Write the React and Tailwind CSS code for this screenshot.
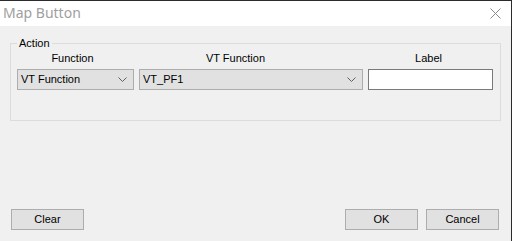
import React from "react";

function Chevron() {
  return (
    <svg width="9" height="5" viewBox="0 0 9 5" className="block">
      <path d="M0.5 0.5 L4.5 4.5 L8.5 0.5" fill="none" stroke="#5f5f5f" strokeWidth="1" />
    </svg>
  );
}

function Combo({ value, width }) {
  return (
    <div
      className={`flex items-center justify-between h-[21px] border border-[#adadad] bg-[#e1e1e1] pl-[3px] pr-[6px] text-[11px] text-black ${width}`}
    >
      <span className="leading-none">{value}</span>
      <Chevron />
    </div>
  );
}

function Button({ children }) {
  return (
    <button className="w-[73px] h-[21px] border border-[#adadad] bg-[#e1e1e1] text-[11px] text-black leading-none">
      {children}
    </button>
  );
}

export default function App() {
  return (
    <div
      className="w-[512px] h-[241px] flex flex-col border-t border-r border-[#2b2b2b] bg-[#f0f0f0] overflow-hidden"
      style={{ fontFamily: '"Liberation Sans", Arial, sans-serif' }}
    >
      <div className="h-[25px] shrink-0 bg-white flex items-center justify-between pl-[3px] pr-[10px]">
        <span
          className="text-[14px] text-[#a0a0a0] leading-none pb-[2px]"
          style={{ fontFamily: '"Noto Sans", "Open Sans", sans-serif' }}
        >
          Map Button
        </span>
        <svg width="11" height="11" viewBox="0 0 11 11" className="block mb-[1px]">
          <path d="M0.5 0.5 L10.5 10.5 M10.5 0.5 L0.5 10.5" stroke="#8a8a8a" strokeWidth="1" fill="none" />
        </svg>
      </div>
      <div className="flex-1 flex flex-col">
        <fieldset className="ml-[10px] mt-[11px] w-[491px] h-[84px] border border-[#dcdcdc] pl-[6px] pr-[6px] pt-0 m-0">
          <legend className="ml-0 px-[2px] text-[11px] leading-[13px] text-black">Action</legend>
          <div className="flex text-[11px] leading-[13px] text-black mt-[2px]">
            <div className="w-[111px] text-center">Function</div>
            <div className="w-[215px] text-center">VT Function</div>
            <div className="w-[121px] ml-[25px] text-center">Label</div>
          </div>
          <div className="flex mt-[4px]">
            <Combo value="VT Function" width="w-[117px]" />
            <div className="ml-[5px]">
              <Combo value="VT_PF1" width="w-[224px]" />
            </div>
            <div className="ml-[5px] w-[125px] h-[21px] border border-[#7a7a7a] bg-white" />
          </div>
        </fieldset>
        <div className="flex-1" />
        <div className="flex items-center pl-[11px] pr-[12px] pb-[11px]">
          <Button>Clear</Button>
          <div className="flex-1" />
          <Button>OK</Button>
          <div className="w-[8px]" />
          <Button>Cancel</Button>
        </div>
      </div>
    </div>
  );
}
